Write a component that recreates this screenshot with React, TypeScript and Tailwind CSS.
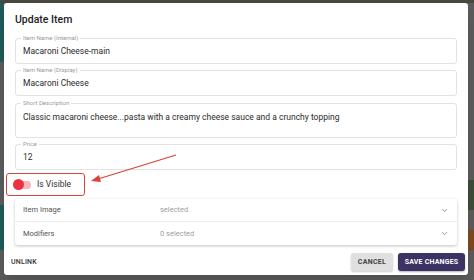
import { ChevronDown } from 'lucide-react';

function Field({ label, value, tall }: { label: string; value: string; tall?: boolean }) {
  return (
    <div
      className={
        tall
          ? 'relative h-[35px] rounded-[3px] border border-[#e2e2e2] px-[7px] pt-[7px] leading-[12px]'
          : 'relative flex h-[26px] items-center rounded-[3px] border border-[#e2e2e2] px-[7px]'
      }
    >
      <span className="absolute -top-[5px] left-[5px] bg-white px-[2px] text-[6px] leading-[8px] text-[#9a9a9a]">
        {label}
      </span>
      <span className="block text-[8.5px] leading-[12px] text-[#2b2b2b]">{value}</span>
    </div>
  );
}

function AccordionRow({ label, value, last }: { label: string; value: string; last?: boolean }) {
  return (
    <div className={last ? 'flex h-[23px] items-center px-[8px]' : 'flex h-[23px] items-center border-b border-[#ececec] px-[8px]'}>
      <span className="w-[137px] text-[7.5px] text-[#555]">{label}</span>
      <span className="flex-1 text-[7.5px] text-[#a0a0a0]">{value}</span>
      <ChevronDown className="h-[9px] w-[9px] text-[#777]" strokeWidth={2} />
    </div>
  );
}

export default function App() {
  return (
    <div
      className="relative h-[280px] w-[474px] overflow-hidden bg-[#5b5b5b] pl-[4px] pt-[3px]"
      style={{ fontFamily: 'Roboto, "Liberation Sans", sans-serif' }}
    >
      {/* backdrop scraps */}
      <div className="absolute left-0 top-0 h-[62px] w-[4px] bg-[#1e5b5a]" />
      <div className="absolute left-0 top-[205px] h-[45px] w-[4px] bg-[#1e5b5a]" />
      <div className="absolute left-0 top-0 h-[3px] w-[474px] bg-[#4a4640]" />
      <div className="absolute right-0 top-[180px] h-[30px] w-[6px] bg-[#3e4a3a]" />
      <div className="absolute right-0 top-[230px] h-[20px] w-[6px] bg-[#7a4a20]" />

      <div className="relative flex h-[272px] w-[464px] flex-col rounded-[3px] bg-white px-[11px] shadow-lg">
        <h2 className="pt-[9px] text-[10.5px] font-medium leading-[16px] text-[#222]">Update Item</h2>

        <div className="mt-[10px] flex flex-col gap-[6px]">
          <Field label="Item Name (Internal)" value="Macaroni Cheese-main" />
          <div className="h-[27px]">
            <Field label="Item Name (Display)" value="Macaroni Cheese" />
          </div>
          <Field
            label="Short Description"
            value="Classic macaroni cheese...pasta with a creamy cheese sauce and a crunchy topping"
            tall
          />
          <Field label="Price" value="12" />
        </div>

        <div className="-ml-[9px] mt-[3px] flex h-[23px] w-[79px] items-center rounded-[3px] border-[1.5px] border-[#d2473c] pl-[7px]">
          <div className="relative h-[8px] w-[17px] rounded-full bg-[#f3b8bb]">
            <div className="absolute -left-[1px] -top-[1.5px] h-[11px] w-[11px] rounded-full bg-[#ee3340]" />
          </div>
          <span className="ml-[6px] text-[8.5px] text-[#333]">Is Visible</span>
        </div>

        <div className="mt-[3px] rounded-[3px] bg-white shadow-[0_1px_3px_rgba(0,0,0,0.25)]">
          <AccordionRow label="Item Image" value="selected" />
          <AccordionRow label="Modifiers" value="0 selected" last />
        </div>

        <div className="mt-[8px] flex items-center">
          <span className="-ml-[4px] text-[7px] font-medium tracking-[0.2px] text-[#333]">UNLINK</span>
          <div className="ml-auto flex gap-[5px] -mr-[8px]">
            <button className="h-[18px] w-[42px] rounded-[3px] bg-[#e0e0e0] text-[7px] font-bold tracking-[0.3px] text-[#444] shadow-[0_1px_2px_rgba(0,0,0,0.2)]">
              CANCEL
            </button>
            <button className="h-[18px] w-[67px] rounded-[3px] bg-[#3c3264] text-[7px] font-bold tracking-[0.2px] text-white shadow-[0_1px_2px_rgba(0,0,0,0.3)]">
              SAVE CHANGES
            </button>
          </div>
        </div>
      </div>

      {/* annotation arrow */}
      <svg className="absolute left-0 top-0" width="474" height="280" viewBox="0 0 474 280">
        <line x1="176" y1="155" x2="98" y2="179" stroke="#d9443a" strokeWidth="1.3" />
        <polygon points="91,181 99,175 101,182" fill="#d9443a" />
      </svg>
    </div>
  );
}
